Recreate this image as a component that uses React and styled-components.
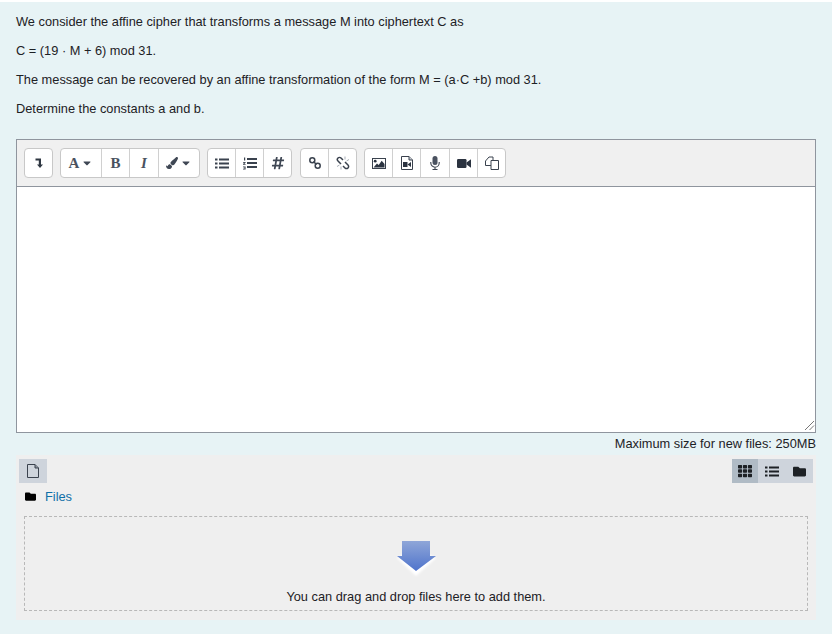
import React from 'react';
import styled, {createGlobalStyle} from 'styled-components';
import {FaPaintBrush, FaHashtag, FaCaretDown, FaFolder, FaTh} from 'react-icons/fa';

const GlobalStyle = createGlobalStyle`
    html, body {
        margin: 0;
        background: #fff;
    }
    body {
        font-family: "Liberation Sans", Arial, sans-serif;
        font-size: 12.8px;
        color: #1d2125;
    }
`;

const LevelDownIcon = () => (
    <svg width="8" height="10" viewBox="0 0 8 10" fill="#2f3742">
        <path d="M0.5 0.5H6V6.5H8L5 10L2 6.5H3.8V2.5H0.5Z" />
    </svg>
);

const ListIcon = ({color = '#3a424e'}) => (
    <svg width="14" height="11" viewBox="0 0 14 11" fill={color}>
        <rect x="0" y="0.5" width="2.5" height="2" />
        <rect x="0" y="4.5" width="2.5" height="2" />
        <rect x="0" y="8.5" width="2.5" height="2" />
        <rect x="4" y="0.5" width="10" height="2" />
        <rect x="4" y="4.5" width="10" height="2" />
        <rect x="4" y="8.5" width="10" height="2" />
    </svg>
);

const NumberedListIcon = () => (
    <svg width="14" height="13" viewBox="0 0 14 13" fill="#3a424e">
        <rect x="4" y="1" width="10" height="2" />
        <rect x="4" y="5" width="10" height="2" />
        <rect x="4" y="9" width="10" height="2" />
        <path d="M1 0.5H2.2V3.5H1ZM0 5H2.6V5.8L1.2 7H2.6V7.8H0V7L1.4 5.8H0ZM0 9.5H2.6V12.5H0V11.8H1.6V11.3H0.6V10.7H1.6V10.2H0Z" />
    </svg>
);

const LinkIcon = () => (
    <svg width="12" height="12" viewBox="0 0 12 12" fill="none" stroke="#3a424e" strokeWidth="1.5">
        <circle cx="3.3" cy="3.3" r="2.5" />
        <circle cx="8.7" cy="8.7" r="2.5" />
        <path d="M4.5 4.5L7.5 7.5" />
    </svg>
);

const UnlinkIcon = () => (
    <svg width="14" height="14" viewBox="0 0 14 14" fill="none" stroke="#3a424e" strokeWidth="1.5">
        <path d="M7 4L5 2A2.1 2.1 0 0 0 2 5L5 8" />
        <path d="M7 10L9 12A2.1 2.1 0 0 0 12 9L9 6" />
        <path d="M9 0.5V3.5M13 3.5L10.5 5M5 13.5V10.5M1 10.5L3.5 9" stroke="#a9afb8" strokeWidth="1" />
    </svg>
);

const ImageIcon = () => (
    <svg width="14" height="11" viewBox="0 0 14 11">
        <rect x="0.5" y="0.5" width="13" height="10" fill="#fff" stroke="#3a424e" />
        <circle cx="3.2" cy="3.2" r="1.4" fill="#2b3340" />
        <path d="M1.5 9.5L5 5.5L6.7 7L9.7 2.8L12.5 6V9.5Z" fill="#2b3340" />
    </svg>
);

const FileMediaIcon = () => (
    <svg width="12" height="14" viewBox="0 0 12 14">
        <path d="M0.5 0.5H8L11.5 4V13.5H0.5Z" fill="#fff" stroke="#3a424e" />
        <path d="M8 0.5V4H11.5" fill="#c9ced6" stroke="#3a424e" />
        <rect x="2" y="6" width="4.5" height="5" fill="#2b3340" />
        <path d="M6.5 8.5L10 6V11Z" fill="#2b3340" />
    </svg>
);

const MicIcon = () => (
    <svg width="10" height="14" viewBox="0 0 10 14">
        <rect x="2.5" y="0" width="5" height="9" rx="2.5" fill="#4a5260" />
        <path d="M0.8 6V7A4.2 4.2 0 0 0 9.2 7V6M5 11.2V13.5M2.5 13.5H7.5" fill="none" stroke="#3a424e" strokeWidth="1.1" />
    </svg>
);

const VideoIcon = () => (
    <svg width="14" height="9" viewBox="0 0 14 9" fill="#2b3340">
        <rect x="0" y="0" width="9.5" height="9" rx="1.2" />
        <path d="M9.5 3.5L14 0.3V8.7L9.5 5.5Z" />
    </svg>
);

const CopyIcon = () => (
    <svg width="14" height="14" viewBox="0 0 14 14" fill="#fff" stroke="#3a424e">
        <path d="M0.5 5L4 1H8V9.5H0.5Z" />
        <path d="M6 4.5H13.5V13.5H6Z" />
    </svg>
);

const FileIcon = () => (
    <svg width="12" height="14" viewBox="0 0 12 14">
        <path d="M0.5 0.5H8L11.5 4V13.5H0.5Z" fill="none" stroke="#3a424e" />
        <path d="M8 0.5V4H11.5" fill="#8e959f" stroke="#3a424e" />
    </svg>
);

const ResizeGrip = () => (
    <svg width="11" height="11" viewBox="0 0 11 11" stroke="#777" strokeWidth="1">
        <path d="M1 10L10 1M5.5 10L10 5.5" />
    </svg>
);

const DropArrow = () => (
    <svg width="44" height="40" viewBox="0 0 44 40">
        <defs>
            <linearGradient id="arrowFill" x1="0" y1="0" x2="0" y2="1">
                <stop offset="0" stopColor="#8fa6d8" />
                <stop offset="1" stopColor="#4f74cc" />
            </linearGradient>
            <filter id="arrowGlow" x="-20%" y="-20%" width="140%" height="140%">
                <feGaussianBlur stdDeviation="1.2" />
            </filter>
        </defs>
        <path d="M3 17L22 35L42 17L36 14H8Z" fill="#fff" filter="url(#arrowGlow)" />
        <path d="M8 0H36V15H42L22 30L3 15H8Z" fill="url(#arrowFill)" />
    </svg>
);

const App = () => (
    <>
        <GlobalStyle />
        <Panel>
            <Question>
                <p>We consider the affine cipher that transforms a message M into ciphertext C as</p>
                <p>C = (19 · M + 6) mod 31.</p>
                <p>The message can be recovered by an affine transformation of the form M = (a·C +b) mod 31.</p>
                <p>Determine the constants a and b.</p>
            </Question>

            <Editor>
                <Toolbar>
                    <Group>
                        <ToolButton $w={27}><LevelDownIcon /></ToolButton>
                    </Group>
                    <Group>
                        <ToolButton $w={40}><SerifGlyph>A</SerifGlyph><FaCaretDown size={12} /></ToolButton>
                        <ToolButton $w={28}><SerifGlyph>B</SerifGlyph></ToolButton>
                        <ToolButton $w={29}><SerifGlyph $italic>I</SerifGlyph></ToolButton>
                        <ToolButton $w={41}><FaPaintBrush size={12} /><FaCaretDown size={12} /></ToolButton>
                    </Group>
                    <Group>
                        <ToolButton $w={27}><ListIcon /></ToolButton>
                        <ToolButton $w={28}><NumberedListIcon /></ToolButton>
                        <ToolButton $w={28}><FaHashtag size={14} /></ToolButton>
                    </Group>
                    <Group $apart>
                        <ToolButton $w={27}><LinkIcon /></ToolButton>
                        <ToolButton $w={28}><UnlinkIcon /></ToolButton>
                    </Group>
                    <Group>
                        <ToolButton $w={27}><ImageIcon /></ToolButton>
                        <ToolButton $w={28}><FileMediaIcon /></ToolButton>
                        <ToolButton $w={29}><MicIcon /></ToolButton>
                        <ToolButton $w={28}><VideoIcon /></ToolButton>
                        <ToolButton $w={28}><CopyIcon /></ToolButton>
                    </Group>
                </Toolbar>
                <EditArea>
                    <GripSpot><ResizeGrip /></GripSpot>
                </EditArea>
            </Editor>

            <MaxSize>Maximum size for new files: 250MB</MaxSize>

            <FileManager>
                <FileToolbar>
                    <SquareButton><FileIcon /></SquareButton>
                    <ViewSwitch>
                        <ViewButton $active $w={26}><FaTh size={14} /></ViewButton>
                        <ViewButton $w={27.5}><ListIcon color="#1d2125" /></ViewButton>
                        <ViewButton $w={27.5}><FaFolder size={13} /></ViewButton>
                    </ViewSwitch>
                </FileToolbar>
                <Breadcrumb>
                    <FaFolder size={11} color="#000" />
                    <FilesLink>Files</FilesLink>
                </Breadcrumb>
                <DropZone>
                    <DropArrow />
                    <DropText>You can drag and drop files here to add them.</DropText>
                </DropZone>
            </FileManager>
        </Panel>
    </>
);

const Panel = styled.div`
    box-sizing: border-box;
    width: 832px;
    height: 632px;
    margin-top: 2px;
    padding: 9px 16px 0;
    background-color: #e7f3f5;
`;

const Question = styled.div`
    margin-bottom: 20px;

    p {
        margin: 0 0 8px;
        line-height: 21px;
    }
`;

const Editor = styled.div`
    border: 1px solid #8f959e;
    background-color: #fff;
`;

const Toolbar = styled.div`
    display: flex;
    gap: 7px;
    height: 47px;
    box-sizing: border-box;
    padding: 8px 7px 0;
    background-color: #f0f0f0;
    border-bottom: 1px solid #8f959e;
`;

const Group = styled.div`
    display: flex;
    height: 30px;
    box-sizing: border-box;
    margin-left: ${props => (props.$apart ? '1px' : '0')};
    background-color: #fff;
    border: 1px solid #c8c8c8;
    border-radius: 4px;
`;

const ToolButton = styled.div`
    display: flex;
    align-items: center;
    justify-content: center;
    gap: 2px;
    box-sizing: border-box;
    width: ${props => props.$w}px;
    color: #3f4754;
    border-left: 1px solid #d0d0d0;

    &:first-child {
        border-left: 0;
    }
`;

const SerifGlyph = styled.span`
    font-family: "Liberation Serif", serif;
    font-size: 15px;
    font-weight: bold;
    color: #4a5260;
    font-style: ${props => (props.$italic ? 'italic' : 'normal')};
`;

const EditArea = styled.div`
    position: relative;
    height: 245px;
`;

const GripSpot = styled.div`
    position: absolute;
    right: 0;
    bottom: -2px;
`;

const MaxSize = styled.div`
    height: 22px;
    text-align: right;
    line-height: 21px;
`;

const FileManager = styled.div`
    height: 165px;
    box-sizing: border-box;
    padding: 4px 3px 0;
    background-color: #efefef;
`;

const FileToolbar = styled.div`
    display: flex;
    justify-content: space-between;
    height: 24px;
`;

const SquareButton = styled.div`
    display: flex;
    align-items: center;
    justify-content: center;
    width: 28px;
    height: 24px;
    background-color: #ced4dc;
`;

const ViewSwitch = styled.div`
    display: flex;
`;

const ViewButton = styled.div`
    display: flex;
    align-items: center;
    justify-content: center;
    width: ${props => props.$w}px;
    height: 24px;
    color: #1d2125;
    background-color: ${props => (props.$active ? '#b0bbc5' : '#ced4dc')};
`;

const Breadcrumb = styled.div`
    display: flex;
    align-items: center;
    gap: 9px;
    height: 26px;
    padding-left: 6px;
`;

const FilesLink = styled.span`
    color: #0f6fa8;
`;

const DropZone = styled.div`
    box-sizing: border-box;
    height: 95px;
    margin: 7px 5px 0;
    padding-top: 24px;
    border: 1px dashed #b8b8b8;
    display: flex;
    flex-direction: column;
    align-items: center;
`;

const DropText = styled.div`
    margin-top: 5px;
    line-height: 21px;
`;

export default App;
